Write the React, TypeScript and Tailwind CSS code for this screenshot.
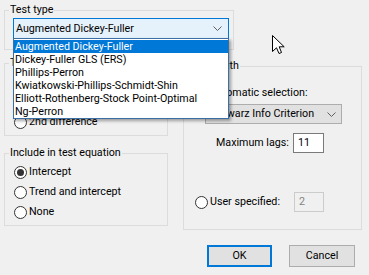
import type { ReactNode } from 'react';

const testTypes = [
  'Augmented Dickey-Fuller',
  'Dickey-Fuller GLS (ERS)',
  'Phillips-Perron',
  'Kwiatkowski-Phillips-Schmidt-Shin',
  'Elliott-Rothenberg-Stock Point-Optimal',
  'Ng-Perron',
];

function Chevron() {
  return (
    <svg width="9" height="5" viewBox="0 0 9 5" fill="none" stroke="#606060" strokeWidth="1">
      <path d="M0.5 0.5 L4.5 4.5 L8.5 0.5" />
    </svg>
  );
}

function Radio({ label, checked = false, className = '' }: { label: string; checked?: boolean; className?: string }) {
  return (
    <div className={`flex h-[20px] items-center gap-[2px] whitespace-nowrap ${className}`}>
      <span className="flex h-[13px] w-[13px] shrink-0 items-center justify-center rounded-full border border-[#333] bg-white">
        {checked && <span className="h-[7px] w-[7px] rounded-full bg-[#333]" />}
      </span>
      <span>{label}</span>
    </div>
  );
}

function GroupBox({ title, className = '', children }: { title: string; className?: string; children?: ReactNode }) {
  return (
    <fieldset className={`min-w-0 border border-[#dcdcdc] ${className}`}>
      <legend className="ml-[4px] whitespace-nowrap px-[1px] leading-[14px]">{title}</legend>
      {children}
    </fieldset>
  );
}

export default function App() {
  return (
    <div className="relative h-[275px] w-[369px] overflow-hidden bg-[#f0f0f0] font-['Roboto',sans-serif] text-[10.7px] leading-[14px] text-black">
      <div className="pl-[4px] pt-[3px]">
        <GroupBox title="Test type" className="h-[47px] w-[230px]">
          <div className="ml-[8px] mt-[1px] flex h-[21px] w-[216px] items-center justify-between border border-[#0078d7] bg-[#e5f1fb] pl-[2px] pr-[6px]">
            <span>Augmented Dickey-Fuller</span>
            <Chevron />
          </div>
        </GroupBox>
      </div>

      <div className="mt-[6px] flex pl-[4px]">
        <div className="flex w-[164px] flex-col gap-[10px]">
          <GroupBox title="Test for unit root in" className="h-[80px]">
            <div className="pl-[9px] pt-[2px]">
              <Radio label="Level" checked />
              <Radio label="1st difference" />
              <Radio label="2nd difference" />
            </div>
          </GroupBox>
          <GroupBox title="Include in test equation" className="h-[80px]">
            <div className="pl-[9px] pt-[2px]">
              <Radio label="Intercept" checked />
              <Radio label="Trend and intercept" />
              <Radio label="None" />
            </div>
          </GroupBox>
        </div>

        <div className="ml-[15px] mt-[3px]">
          <GroupBox title="Lag length" className="h-[171px] w-[179px]">
            <Radio label="Automatic selection:" checked className="mt-[10px] pl-[11px]" />
            <div className="ml-[21px] mt-[1px] flex h-[20px] w-[137px] items-center justify-between whitespace-nowrap border border-[#adadad] bg-[#e1e1e1] pl-[3px] pr-[5px]">
              <span>Schwarz Info Criterion</span>
              <Chevron />
            </div>
            <div className="mt-[9px] flex h-[20px] items-center whitespace-nowrap">
              <span className="ml-[32px] w-[77px]">Maximum lags:</span>
              <div className="flex h-[20px] w-[31px] items-center border border-[#7a7a7a] bg-white pl-[4px]">11</div>
            </div>
            <div className="mt-[39px] flex h-[20px] items-center whitespace-nowrap pl-[11px]">
              <span className="h-[13px] w-[13px] shrink-0 rounded-full border border-[#333] bg-white" />
              <span className="ml-[2px] w-[84px]">User specified:</span>
              <div className="flex h-[20px] w-[30px] items-center border border-[#cccccc] bg-[#f0f0f0] pl-[4px] text-[#838383]">2</div>
            </div>
          </GroupBox>
        </div>
      </div>

      <div className="mt-[15px] flex justify-end gap-[17px] pr-[14px]">
        <button className="flex h-[22px] w-[65px] items-center justify-center border-2 border-[#0078d7] bg-[#e1e1e1]">OK</button>
        <button className="flex h-[22px] w-[66px] items-center justify-center border border-[#adadad] bg-[#e1e1e1]">Cancel</button>
      </div>

      <ul className="absolute left-[13px] top-[38px] w-[216px] border border-[#3b6ea5] bg-white pt-[1px] shadow-[2px_2px_3px_rgba(0,0,0,0.35)]">
        {testTypes.map((t, i) => (
          <li
            key={t}
            className={`h-[13px] whitespace-nowrap pl-[1px] leading-[13px] ${i === 0 ? 'bg-[#0078d7] text-white' : ''}`}
          >
            {t}
          </li>
        ))}
      </ul>

      <svg className="absolute left-[272px] top-[35px]" width="13" height="20" viewBox="0 0 13 20">
        <path d="M0.5 0.5 L0.5 16.5 L4.5 12.8 L7 18.5 L9.5 17.5 L7.2 11.8 L12.2 11.8 Z" fill="white" stroke="black" strokeWidth="1" />
      </svg>
    </div>
  );
}
